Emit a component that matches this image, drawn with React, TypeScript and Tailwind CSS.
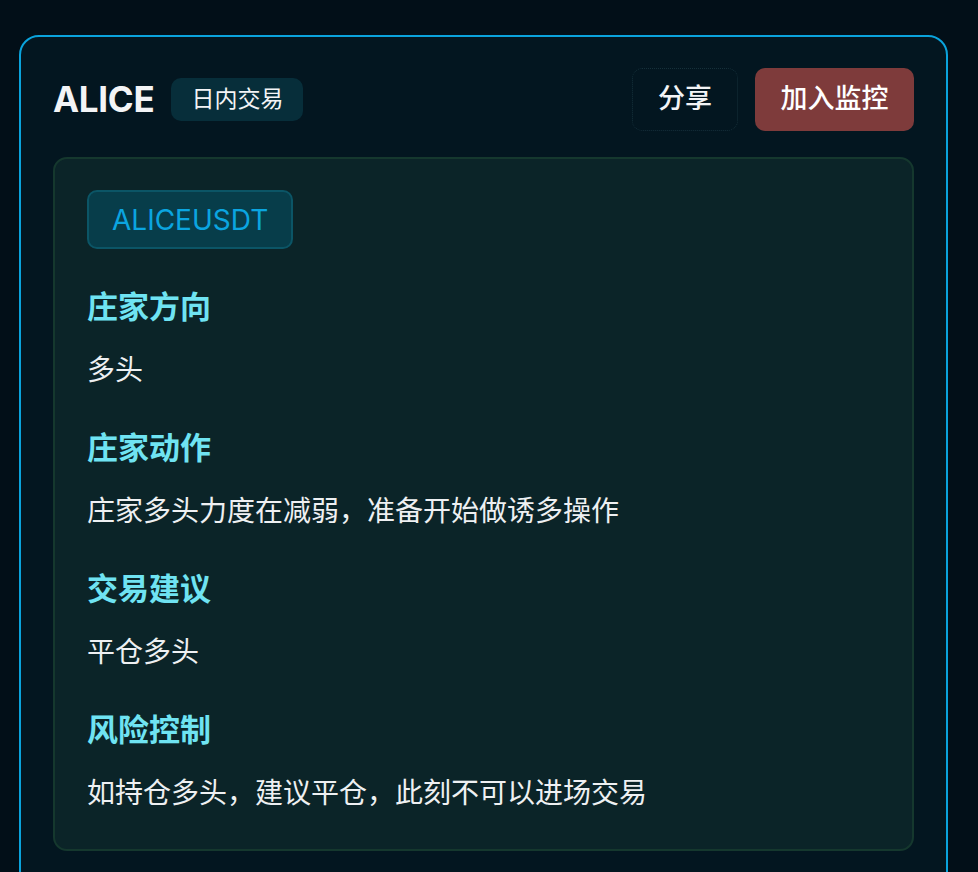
const sections = [
  { title: '庄家方向', body: '多头' },
  { title: '庄家动作', body: '庄家多头力度在减弱，准备开始做诱多操作' },
  { title: '交易建议', body: '平仓多头' },
  { title: '风险控制', body: '如持仓多头，建议平仓，此刻不可以进场交易' },
]

export default function App() {
  return (
    <div
      className="min-h-[872px] bg-[#020f18] pt-[35px] pl-[19px] pr-[30px] overflow-hidden"
      style={{ fontFamily: 'Inter, "Noto Sans CJK SC", sans-serif' }}
    >
      <div className="h-[860px] rounded-[20px] border-2 border-[#0aa3dc] bg-[#031620] px-[32px] pt-[31px]">
        {/* header */}
        <div className="flex items-center justify-between h-[63px]">
          <div className="flex items-center gap-[17px]">
            <h1 className="text-[35px] font-bold text-[#f3f4f6] tracking-[-0.3px]">ALICE</h1>
            <span className="h-[43px] px-[20px] rounded-[10px] bg-[#072e3a] text-[23px] text-[#f3f4f6] flex items-center">
              日内交易
            </span>
          </div>
          <div className="flex items-center gap-[17px]">
            <button className="h-[63px] w-[106px] rounded-[10px] border border-dotted border-[#16303a] text-[27px] text-[#f3f4f6] font-medium">
              分享
            </button>
            <button className="h-[63px] w-[159px] rounded-[10px] bg-[#7e3b3b] text-[27px] text-white font-medium">
              加入监控
            </button>
          </div>
        </div>

        {/* panel */}
        <div className="mt-[26px] rounded-[14px] border-2 border-[#15382e] bg-[#0b2428] px-[32px] pt-[31px] pb-[36px]">
          <span className="inline-flex items-center h-[59px] px-[23px] rounded-[10px] border-2 border-[#0b5566] bg-[#073d4a] text-[28px] text-[#0ba5e0]">
            ALICEUSDT
          </span>
          <div className="mt-[38px] flex flex-col gap-[38px]">
            {sections.map((s) => (
              <div key={s.title}>
                <h2 className="text-[31px] leading-[40px] font-bold text-[#6fe3f2]">{s.title}</h2>
                <p className="mt-[23px] text-[28px] leading-[40px] text-[#eef0f2]">{s.body}</p>
              </div>
            ))}
          </div>
        </div>
      </div>
    </div>
  )
}
